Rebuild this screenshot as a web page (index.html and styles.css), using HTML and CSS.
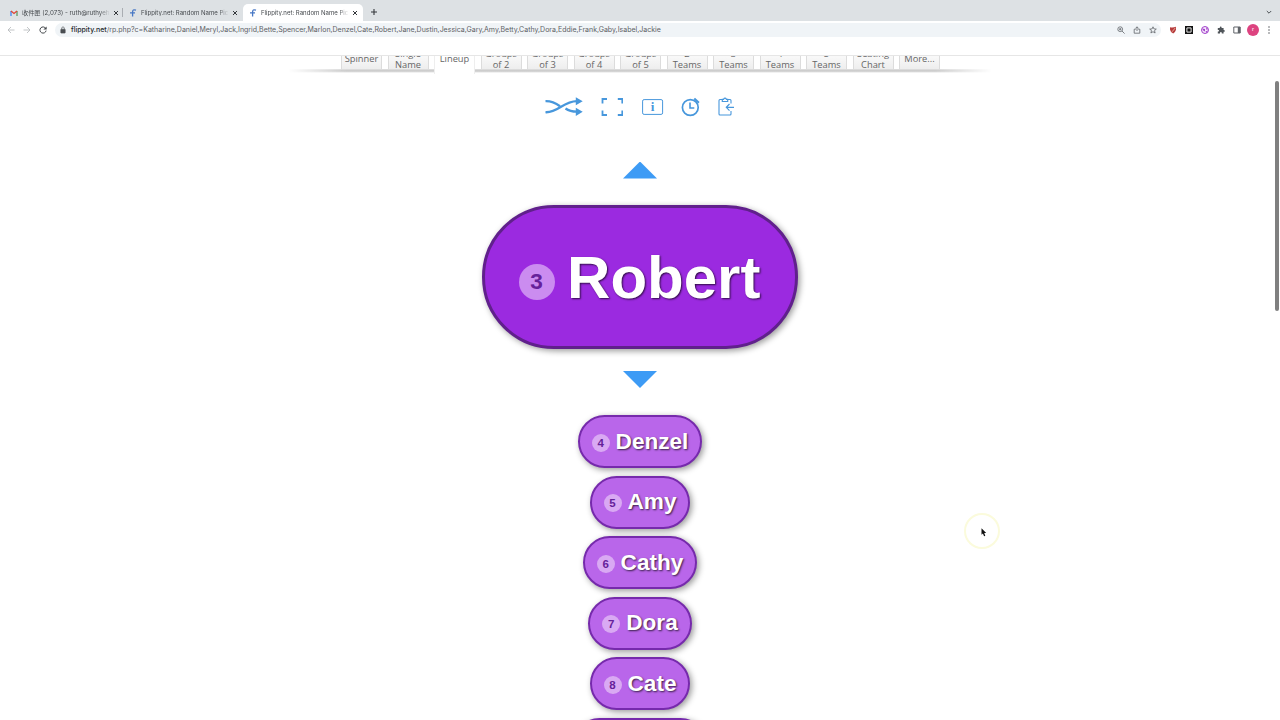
FILE: index.html
```html
<!DOCTYPE html>
<html lang="en">
<head>
    <meta charset="UTF-8">
    <meta name="viewport" content="width=device-width, initial-scale=1.0">
    <title>Flippity.net: Random Name Picker</title>
    <link rel="stylesheet" href="styles.css">
</head>
<body>
    <!-- Browser tabs -->
    <div class="tab-strip">
        <div class="browser-tab mail-tab">
            <svg class="favicon" viewBox="0 0 8 8"><path d="M1 7V2" stroke="#4285f4"/><path d="M7 7V2" stroke="#5b9b62"/><path d="M1 2l3 2.5L7 2" stroke="#e04437"/></svg>
            <span class="tab-title">收件匣 (2,073) - ruth@ruthyeh</span>
            <svg class="close" viewBox="0 0 6 6"><path d="M1 1l4 4M5 1l-4 4"/></svg>
        </div>
        <div class="browser-tab">
            <svg class="favicon" viewBox="0 0 8 8"><path class="flip-logo" d="M7 1.2C4.4.3 3.6 1 3.6 3v4.6M1 3.9h5"/></svg>
            <span class="tab-title">Flippity.net: Random Name Pic</span>
            <svg class="close" viewBox="0 0 6 6"><path d="M1 1l4 4M5 1l-4 4"/></svg>
        </div>
        <div class="browser-tab current">
            <svg class="favicon" viewBox="0 0 8 8"><path class="flip-logo" d="M7 1.2C4.4.3 3.6 1 3.6 3v4.6M1 3.9h5"/></svg>
            <span class="tab-title">Flippity.net: Random Name Pic</span>
            <svg class="close" viewBox="0 0 6 6"><path d="M1 1l4 4M5 1l-4 4"/></svg>
        </div>
        <svg class="new-tab" viewBox="0 0 8 8"><path d="M4 1v6M1 4h6"/></svg>
        <svg class="tab-menu" viewBox="0 0 6 6"><path d="M.8 2L3 4.2 5.2 2"/></svg>
    </div>

    <!-- Toolbar -->
    <div class="toolbar">
        <div class="nav-buttons">
            <svg class="dim" viewBox="0 0 8 8"><path d="M7.5 4H1M4 1L1 4l3 3"/></svg>
            <svg class="dim" viewBox="0 0 8 8"><path d="M.5 4H7M4 1l3 3-3 3"/></svg>
            <svg viewBox="0 0 8 8"><path d="M6.7 2.4A3.1 3.1 0 1 0 7.1 4.6"/><path class="fill" d="M7.6.4v3.2H4.4z"/></svg>
        </div>
        <div class="address-bar">
            <svg class="lock" viewBox="0 0 6 8"><rect x=".8" y="3.2" width="4.4" height="3.9" rx=".5"/><path d="M1.7 3.5V2.2a1.3 1.3 0 0 1 2.6 0v1.3"/></svg>
            <span class="url"><b>flippity.net</b>/rp.php?c=Katharine,Daniel,Meryl,Jack,Ingrid,Bette,Spencer,Marlon,Denzel,Cate,Robert,Jane,Dustin,Jessica,Gary,Amy,Betty,Cathy,Dora,Eddie,Frank,Gaby,Isabel,Jackie</span>
            <div class="address-icons">
                <svg viewBox="0 0 8 8"><circle cx="3.2" cy="3.2" r="2.4"/><path d="M5 5l2.6 2.6M2 3.2h2.4M3.2 2v2.4"/></svg>
                <svg viewBox="0 0 8 8"><path d="M2.8 3.2H1.2v4h5.6v-4H5.2M4 5V1M2.5 2.2L4 .8l1.5 1.4"/></svg>
                <svg viewBox="0 0 8 8"><path d="M4 .8l.9 2.1 2.4.2-1.8 1.5.6 2.4L4 5.7 1.9 7l.6-2.4L.7 3.1l2.4-.2z"/></svg>
            </div>
        </div>
        <div class="extensions">
            <svg viewBox="0 0 8 8"><path d="M1 1.2Q4 1.8 7 .8v3Q6.4 6.4 4.2 7.4 1.2 6 1 3.6z" fill="#b63c3c"/><path d="M3 5.8l3.4-4" stroke="#e9a99c"/></svg>
            <svg viewBox="0 0 8 8"><path d="M0 0h8v8H0z" fill="#111"/><path d="M1.900 1.900h4.200v4.200H1.900z" fill="none" stroke="#fff" stroke-width=".9"/></svg>
            <svg viewBox="0 0 8 8"><circle cx="4" cy="4" r="3.500" fill="#f6e8fb" stroke="#a142ca"/><path d="M1 2.500l3 .5v2.500L2.500 4.800zM5 1l2 2-1.500 1zM4.500 5.500L7 4.500 5.500 7z" fill="#a142ca"/></svg>
            <svg viewBox="0 0 8 8"><path d="M.8 2h2V1.4a.9.9 0 0 1 1.8 0V2h2v2h.3a.9.9 0 0 1 0 1.8h-.3v1.8H4.8V7a.9.9 0 0 0-1.8 0v.6H.8V5.6h.5a.8.8 0 0 0 0-1.6H.8z" fill="#50555a"/></svg>
            <svg viewBox="0 0 8 8"><path d="M.8 1h6.4v6H.8z" fill="none" stroke="#5f6368"/><path d="M4.8 1h2.4v6H4.8z" fill="#5f6368"/></svg>
            <span class="avatar">r</span>
            <svg class="more" viewBox="0 0 8 8"><circle cx="4" cy="1.1" r=".75"/><circle cx="4" cy="4" r=".75"/><circle cx="4" cy="6.9" r=".75"/></svg>
        </div>
    </div>

    <!-- Page, scrolled a little -->
    <div class="page">
        <div class="mode-tabs">
            <div class="mode">Spinner</div>
            <div class="mode">Single<br>Name</div>
            <div class="mode selected">Lineup</div>
            <div class="mode">Groups<br>of 2</div>
            <div class="mode">Groups<br>of 3</div>
            <div class="mode">Groups<br>of 4</div>
            <div class="mode">Groups<br>of 5</div>
            <div class="mode">2<br>Teams</div>
            <div class="mode">3<br>Teams</div>
            <div class="mode">4<br>Teams</div>
            <div class="mode">5<br>Teams</div>
            <div class="mode">Seating<br>Chart</div>
            <div class="mode">More...</div>
        </div>
        <div class="tab-line"><i class="left"></i><i class="right"></i></div>

        <div class="tools">
            <svg width="38" height="20" viewBox="0 0 38 20">
                <path d="M.5 15.200C13 16 18 4.200 32 4.200" stroke-width="2.300"/>
                <path d="M.5 4.200C7 4 11 6.300 15 9.200" stroke-width="2.300"/>
                <path d="M20.500 11.500Q25 14.600 32 14.700" stroke-width="2.300"/>
                <path class="solid" d="M30.800.2l6.900 4-6.900 4.100zM30.800 10.800l6.900 4-6.900 4.100z"/>
            </svg>
            <svg width="22" height="18" viewBox="0 0 22 18"><path d="M1.500 5.500V1h4.500M16.800 1h4.500v4.500M21.300 12.500V17h-4.500M6 17H1.500v-4.500" stroke-width="1.800"/></svg>
            <svg class="info" width="22" height="18" viewBox="0 0 22 18"><rect x=".6" y="1.600" width="20" height="14.800" rx="1.500" stroke-width="1"/><text x="10.600" y="13.400" text-anchor="middle">i</text></svg>
            <svg class="timer" width="20" height="20" viewBox="0 0 20 20"><circle cx="9.300" cy="10.500" r="7.900" stroke-width="1.700"/><path d="M9 5.500v5.500h4.300" stroke-width="1.600"/><path d="M13.300 1.400l4.600 4.300" stroke-width="2"/></svg>
            <svg class="clipboard" width="18" height="20" viewBox="0 0 18 20"><path d="M4.500 2.500H2Q1 2.500 1 3.500v13.500q0 1 1 1h10q1 0 1-1v-3M13 6.500v-3q0-1-1-1H9.700" stroke-width="1.100"/><path d="M4.300 4.500V2.300h1.200q1.500-2.300 3 0h1.200v2.200zM16 10.300H8.500M11.500 7L8.300 10.300l3.200 3.300" stroke-width="1.200"/></svg>
        </div>

        <div class="lineup">
            <div class="arrow up"></div>
            <div class="name-pill active"><span class="number">3</span><span class="name">Robert</span></div>
            <div class="arrow down"></div>
            <div class="queue">
                <div class="name-pill"><span class="number">4</span><span class="name">Denzel</span></div>
                <div class="name-pill"><span class="number">5</span><span class="name">Amy</span></div>
                <div class="name-pill"><span class="number">6</span><span class="name">Cathy</span></div>
                <div class="name-pill"><span class="number">7</span><span class="name">Dora</span></div>
                <div class="name-pill"><span class="number">8</span><span class="name">Cate</span></div>
                <div class="name-pill"><span class="number">9</span><span class="name">Jessica</span></div>
            </div>
        </div>

        <div class="scrollbar"></div>
        <div class="click-ring"></div>
        <svg class="cursor" viewBox="0 0 6 9"><path d="M.5.3v6.400l1.400-1.200 1.200 2.800 1.200-.5-1.100-2.700h2z"/></svg>
    </div>
</body>
</html>
```
FILE: styles.css
```css
* {
    box-sizing: border-box;
}

body {
    margin: 0;
    height: 720px;
    overflow: hidden;
    background-color: #fff;
    font-family: "Liberation Sans", Arial, sans-serif;
}

svg {
    display: block;
    flex: none;
}

/* Browser tabs */
.tab-strip {
    display: flex;
    align-items: flex-end;
    height: 21px;
    padding-left: 4px;
    background-color: #dde1e4;
}

.browser-tab {
    display: flex;
    align-items: center;
    width: 120px;
    height: 17px;
    padding: 0 5px 0 6px;
    font-family: Inter, "Noto Sans CJK TC", sans-serif;
    font-size: 6.05px;
    color: #45494d;
}

.mail-tab {
    width: 119px;
    height: 9px;
    margin-bottom: 4px;
    padding-right: 3px;
    border-right: 1px solid #a9adb2;
    font-size: 6.2px;
}

.browser-tab.current {
    background-color: #fff;
    border-radius: 5px 5px 0 0;
}

.favicon {
    width: 8px;
    height: 8px;
    margin-right: 4px;
    fill: none;
    stroke-width: 1.3;
}

.flip-logo {
    stroke: #4777c4;
}

.tab-title {
    width: 88px;
    overflow: hidden;
    white-space: nowrap;
    mask-image: linear-gradient(to right, #000 88%, transparent);
}

.close {
    width: 6px;
    height: 6px;
    margin-left: auto;
    stroke: #33373b;
    stroke-width: 1;
}

.new-tab {
    width: 8px;
    height: 8px;
    margin: 0 0 5px 7px;
    stroke: #33373b;
    stroke-width: 1.1;
}

.tab-menu {
    width: 6px;
    height: 6px;
    margin: 0 8px 6px auto;
    fill: none;
    stroke: #4c5054;
}

/* Toolbar */
.toolbar {
    display: flex;
    align-items: center;
    height: 18px;
    padding-left: 7px;
}

.nav-buttons {
    display: flex;
    gap: 8px;
    width: 48px;
}

.nav-buttons svg {
    width: 8px;
    height: 8px;
    fill: none;
    stroke: #42464a;
}

.nav-buttons .dim {
    stroke: #b4b7ba;
    stroke-width: .8;
}

.nav-buttons .fill {
    fill: #42464a;
    stroke: none;
}

.address-bar {
    display: flex;
    align-items: center;
    width: 1106px;
    height: 14px;
    padding: 0 4px 0 5px;
    border-radius: 7px;
    background-color: #f0f4f7;
}

.lock {
    width: 6px;
    height: 8px;
    fill: #4a4e52;
    stroke: #4a4e52;
    stroke-width: .6;
}

.lock path {
    fill: none;
}

.url {
    margin-left: 5px;
    font-family: Inter, sans-serif;
    font-size: 7px;
    line-height: 8px;
    color: #5c6064;
    white-space: nowrap;
}

.url b {
    color: #25292c;
    font-weight: 500;
}

.address-icons {
    display: flex;
    gap: 8px;
    margin-left: auto;
}

.address-icons svg {
    width: 8px;
    height: 8px;
    fill: none;
    stroke: #5f6368;
    stroke-width: .8;
}

.extensions {
    display: flex;
    align-items: center;
    gap: 8px;
    margin-left: 8px;
}

.extensions svg {
    width: 8px;
    height: 8px;
}

.avatar {
    width: 12px;
    height: 12px;
    margin: 0 -2px;
    border-radius: 50%;
    background-color: #dd4380;
    color: #fff;
    font-size: 6px;
    line-height: 11px;
    text-align: center;
}

.extensions .more {
    fill: #505458;
}

/* Page */
.page {
    position: relative;
    height: 665px;
    margin-top: 16px;
    overflow: hidden;
    border-top: 1px solid #e6e6e6;
}

.mode-tabs {
    display: flex;
    gap: 5.5px;
    width: 600px;
    height: 23px;
    margin: -8px auto 0;
    transform: translateX(1px);
}

.mode {
    display: flex;
    flex: none;
    align-items: center;
    justify-content: center;
    width: 41px;
    height: 23px;
    border: solid #dcdcdc;
    border-width: 0 1px;
    background: linear-gradient(#f8f8f8 40%, #ececec);
    font-family: "Open Sans", sans-serif;
    font-size: 9.3px;
    line-height: 10.5px;
    color: #666;
    text-align: center;
}

.mode.selected {
    height: 26px;
    padding-bottom: 3px;
    border-color: #eee;
    position: relative;
    z-index: 1;
    background: #fff;
}

/* soft shadow under the tabs, open below the selected one */
.tab-line {
    display: flex;
    justify-content: space-between;
    width: 704px;
    height: 4px;
    margin: -2px auto 0;
}

.tab-line i {
    background: linear-gradient(#e2e2e2, #c6c6c6 50%, #fff);
}

.tab-line .left {
    width: 146px;
    mask-image: linear-gradient(to right, transparent, #000 40%);
}

.tab-line .right {
    width: 517px;
    mask-image: linear-gradient(to left, transparent, #000 11%);
}

.tools {
    display: flex;
    align-items: center;
    gap: 18px;
    width: 190px;
    height: 20px;
    margin: 24px auto 0;
}

.tools svg {
    fill: none;
    stroke: #4797dc;
}

.tools .info {
    margin-left: 1px;
}

.tools .timer {
    margin-left: -1px;
}

.tools .clipboard {
    margin-left: -1px;
}

.tools svg .solid {
    fill: #4797dc;
    stroke: none;
}

.tools text {
    font: bold 13px "Liberation Serif", serif;
    fill: #4797dc;
    stroke: none;
}

/* Lineup */
.lineup {
    display: flex;
    flex-direction: column;
    align-items: center;
    margin-top: 44.5px;
}

.arrow {
    width: 34px;
    height: 17px;
    background-color: #3d9bf5;
}

.arrow.up {
    clip-path: polygon(50% 0, 100% 100%, 0 100%);
}

.arrow.down {
    clip-path: polygon(0 0, 100% 0, 50% 100%);
}

.name-pill {
    display: flex;
    align-items: center;
    gap: 6px;
    height: 53px;
    padding: 0 12px;
    border: 2px solid #762aac;
    border-radius: 27px;
    background-color: #b966ea;
    box-shadow: 2px 2px 6px rgba(0, 0, 0, .4);
    color: #fff;
    font-weight: bold;
}

.name {
    padding-top: 1px;
    font-size: 22.6px;
    line-height: 1;
    text-shadow: 1px 1px 2px rgba(0, 0, 0, .7);
}

.number {
    width: 18px;
    height: 18px;
    margin-top: 2px;
    border-radius: 50%;
    background-color: #d9a9f3;
    color: #66219a;
    font-size: 11.5px;
    line-height: 18px;
    text-align: center;
}

.name-pill.active {
    gap: 12.5px;
    height: 144px;
    margin: 26.5px 0 22px;
    padding: 0 35px 0 34px;
    border: 3px solid #60208c;
    border-radius: 72px;
    background-color: #9b2ae0;
}

.active .name {
    padding-top: 2px;
    font-size: 60px;
}

.active .number {
    width: 36px;
    height: 36px;
    margin-top: 10px;
    background-color: #cb8cf0;
    font-size: 22.6px;
    line-height: 36px;
}

.queue {
    display: flex;
    flex-direction: column;
    align-items: center;
    gap: 7.5px;
    margin-top: 27px;
}

.scrollbar {
    position: absolute;
    top: 25px;
    right: 1px;
    width: 4px;
    height: 230px;
    border-radius: 2px;
    background-color: #808080;
}

/* Mouse pointer and its halo */
.click-ring {
    position: absolute;
    left: 964px;
    top: 457px;
    width: 36px;
    height: 36px;
    border: 2px solid #fbfbdc;
    border-radius: 50%;
}

.cursor {
    position: absolute;
    left: 981px;
    top: 472px;
    width: 6px;
    height: 9px;
    fill: #111;
}
```
